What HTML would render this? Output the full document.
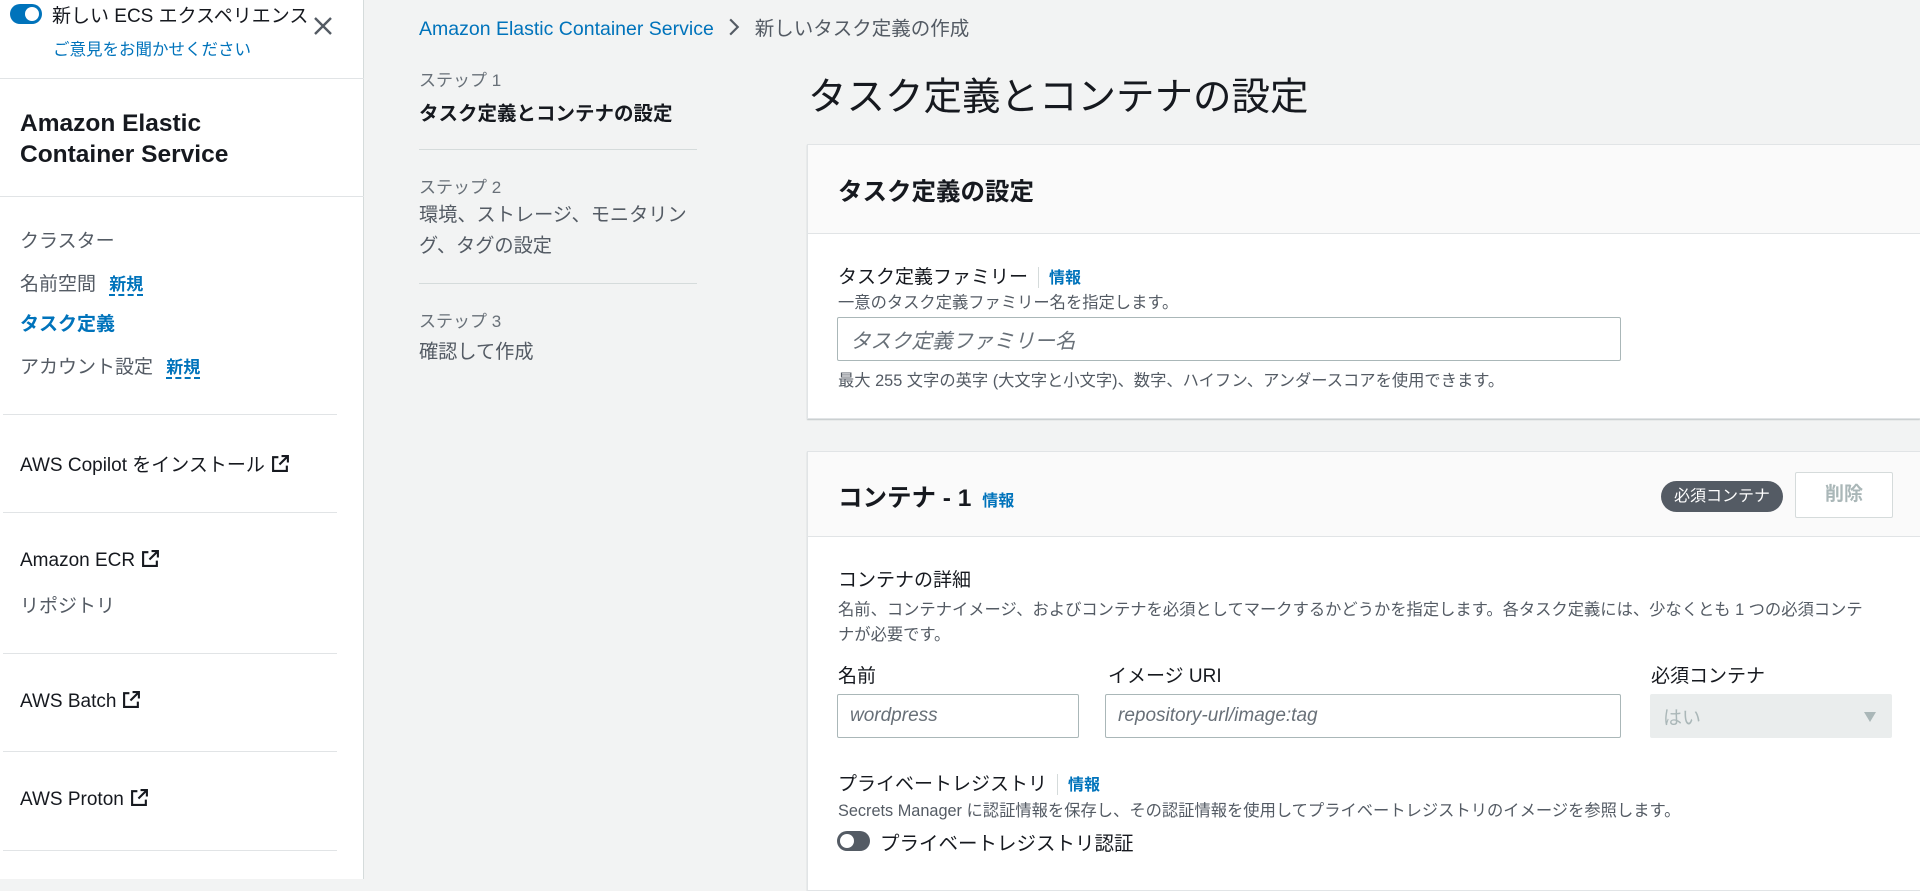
<!DOCTYPE html>
<html><head><meta charset="utf-8"><style>
*{box-sizing:border-box;margin:0;padding:0}
body{width:1920px;height:879px;overflow:hidden;background:#f2f3f3;font-family:"Liberation Sans","Noto Sans CJK JP",sans-serif;color:#16191f;position:relative}
.a{position:absolute;white-space:nowrap}
#side{position:absolute;left:0;top:0;width:364px;height:879px;background:#fff;border-right:1px solid #d5dbdb}
.hr{position:absolute;height:1px;background:#e1e4e6}
.blue{color:#0073bb}
.nav{font-size:19px;color:#545b64}
.new{font-size:17px;font-weight:bold;color:#0073bb;border-bottom:2px dashed #0073bb;line-height:18px}
.ext{display:inline-block;vertical-align:-2px;margin-left:6px}
.step{font-size:17px;color:#687078}
.panel{position:absolute;left:807px;right:0;background:#fff;border:1px solid #e1e4e6;border-right:none;box-shadow:0 1px 1px rgba(0,28,36,.2)}
.ph{background:#fafafa;border-bottom:1px solid #e1e4e6;position:relative}
.lbl{font-size:19px;color:#16191f}
.desc{font-size:16.3px;color:#545b64}
.inp{position:absolute;border:1px solid #aab7b8;border-radius:2px;background:#fff;font-size:19px;font-style:italic;color:#687078;padding-left:12px;display:flex;align-items:center}
.info{font-size:16px;font-weight:bold;color:#0073bb}
</style></head><body>
<div id="side">
  <div class="a" style="left:10px;top:4px;width:32px;height:20px;border-radius:10px;background:#0073bb"><div style="position:absolute;right:3px;top:3px;width:14px;height:14px;border-radius:7px;background:#fff"></div></div>
  <div class="a" style="left:52px;top:1px;font-size:19px">新しい ECS エクスペリエンス</div>
  <svg class="a" style="left:313px;top:16px" width="20" height="20" viewBox="0 0 20 20"><path d="M2 2L18 18M18 2L2 18" stroke="#545b64" stroke-width="2.4"/></svg>
  <div class="a blue" style="left:53px;top:36px;font-size:16.5px">ご意見をお聞かせください</div>
  <div class="hr" style="left:0;width:364px;top:78px"></div>
  <div class="a" style="left:20px;top:108px;font-size:24.5px;font-weight:bold;line-height:31px">Amazon Elastic<br>Container Service</div>
  <div class="hr" style="left:0;width:364px;top:196px"></div>
  <div class="a nav" style="left:20px;top:226px">クラスター</div>
  <div class="a nav" style="left:20px;top:269px">名前空間 <span class="new" style="margin-left:8px">新規</span></div>
  <div class="a" style="left:20px;top:309px;font-size:19px;font-weight:bold;color:#0073bb">タスク定義</div>
  <div class="a nav" style="left:20px;top:352px">アカウント設定 <span class="new" style="margin-left:8px">新規</span></div>
  <div class="hr" style="left:3px;width:334px;top:414px"></div>
  <div class="a nav" style="left:20px;top:450px;color:#16191f">AWS Copilot をインストール<svg class="ext" width="19" height="19" viewBox="0 0 18 18"><path d="M10 2h6v6M16 2L8 10M7 3H2v13h13v-5" fill="none" stroke="#16191f" stroke-width="2"/></svg></div>
  <div class="hr" style="left:3px;width:334px;top:512px"></div>
  <div class="a nav" style="left:20px;top:549px;color:#16191f">Amazon ECR<svg class="ext" width="19" height="19" viewBox="0 0 18 18"><path d="M10 2h6v6M16 2L8 10M7 3H2v13h13v-5" fill="none" stroke="#16191f" stroke-width="2"/></svg></div>
  <div class="a nav" style="left:20px;top:591px">リポジトリ</div>
  <div class="hr" style="left:3px;width:334px;top:653px"></div>
  <div class="a nav" style="left:20px;top:690px;color:#16191f">AWS Batch<svg class="ext" width="19" height="19" viewBox="0 0 18 18"><path d="M10 2h6v6M16 2L8 10M7 3H2v13h13v-5" fill="none" stroke="#16191f" stroke-width="2"/></svg></div>
  <div class="hr" style="left:3px;width:334px;top:751px"></div>
  <div class="a nav" style="left:20px;top:788px;color:#16191f">AWS Proton<svg class="ext" width="19" height="19" viewBox="0 0 18 18"><path d="M10 2h6v6M16 2L8 10M7 3H2v13h13v-5" fill="none" stroke="#16191f" stroke-width="2"/></svg></div>
  <div class="hr" style="left:3px;width:334px;top:850px"></div>
</div>

<div class="a" style="left:419px;top:12px;font-size:19.5px"><span class="blue">Amazon Elastic Container Service</span><svg style="margin:0 14px;vertical-align:-2px" width="13" height="20" viewBox="0 0 12 18"><path d="M2 2l7 7-7 7" fill="none" stroke="#545b64" stroke-width="2"/></svg><span style="color:#545b64">新しいタスク定義の作成</span></div>

<div class="a step" style="left:419px;top:66px">ステップ 1</div>
<div class="a" style="left:419px;top:97px;font-size:19.5px;font-weight:bold">タスク定義とコンテナの設定</div>
<div class="hr" style="left:419px;width:278px;top:149px;background:#d5dbdb"></div>
<div class="a step" style="left:419px;top:173px">ステップ 2</div>
<div class="a" style="left:419px;top:200px;font-size:19.2px;color:#545b64;line-height:31px">環境、ストレージ、モニタリン<br>グ、タグの設定</div>
<div class="hr" style="left:419px;width:278px;top:283px;background:#d5dbdb"></div>
<div class="a step" style="left:419px;top:307px">ステップ 3</div>
<div class="a" style="left:419px;top:336px;font-size:19.2px;color:#545b64">確認して作成</div>

<div class="a" style="left:808px;top:66px;font-size:38.5px;color:#16191f">タスク定義とコンテナの設定</div>

<div class="panel" style="top:144px;height:275px">
  <div class="ph" style="height:89px"><div class="a" style="left:30px;top:28px;font-size:24.5px;font-weight:bold">タスク定義の設定</div></div>
  <div class="a lbl" style="left:30px;top:117px">タスク定義ファミリー<span style="border-left:1px solid #d5dbdb;margin:0 10px"></span><span class="info">情報</span></div>
  <div class="a desc" style="left:30px;top:144px">一意のタスク定義ファミリー名を指定します。</div>
  <div class="inp" style="left:29px;top:172px;width:784px;height:44px;font-size:20.5px">タスク定義ファミリー名</div>
  <div class="a desc" style="left:30px;top:222px">最大 255 文字の英字 (大文字と小文字)、数字、ハイフン、アンダースコアを使用できます。</div>
</div>

<div class="panel" style="top:451px;height:440px">
  <div class="ph" style="height:85px">
    <div class="a" style="left:30px;top:27px;font-size:24.5px;font-weight:bold">コンテナ - 1 <span class="info" style="font-size:16px;margin-left:4px">情報</span></div>
    <div class="a" style="left:853px;top:29px;width:122px;height:31px;border-radius:16px;background:#545b64;color:#fff;font-size:16px;text-align:center;line-height:31px">必須コンテナ</div>
    <div class="a" style="left:987px;top:20px;width:98px;height:46px;border:1px solid #d5dbdb;border-radius:2px;background:#fff;color:#aab7b8;font-size:19px;font-weight:bold;text-align:center;line-height:44px">削除</div>
  </div>
  <div class="a lbl" style="left:30px;top:113px">コンテナの詳細</div>
  <div class="a desc" style="left:30px;top:146px;line-height:25px">名前、コンテナイメージ、およびコンテナを必須としてマークするかどうかを指定します。各タスク定義には、少なくとも 1 つの必須コンテ<br>ナが必要です。</div>
  <div class="a lbl" style="left:30px;top:209px">名前</div>
  <div class="a lbl" style="left:300px;top:209px">イメージ URI</div>
  <div class="a lbl" style="left:843px;top:209px">必須コンテナ</div>
  <div class="inp" style="left:29px;top:242px;width:242px;height:44px">wordpress</div>
  <div class="inp" style="left:297px;top:242px;width:516px;height:44px">repository-url/image:tag</div>
  <div class="inp" style="left:842px;top:242px;width:242px;height:44px;background:#eaeded;border-color:#eaeded;font-style:normal;color:#aab7b8">はい<svg class="a" style="left:212px;top:16px" width="14" height="12" viewBox="0 0 14 12"><path d="M1 1h12L7 11z" fill="#aab7b8"/></svg></div>
  <div class="a lbl" style="left:30px;top:317px">プライベートレジストリ<span style="border-left:1px solid #d5dbdb;margin:0 10px"></span><span class="info">情報</span></div>
  <div class="a desc" style="left:30px;top:345px">Secrets Manager に認証情報を保存し、その認証情報を使用してプライベートレジストリのイメージを参照します。</div>
  <div class="a" style="left:29px;top:379px;width:33px;height:20px;border-radius:10px;background:#545b64"><div style="position:absolute;left:3px;top:3px;width:14px;height:14px;border-radius:7px;background:#fff"></div></div>
  <div class="a" style="left:72px;top:375px;font-size:19.5px">プライベートレジストリ認証</div>
</div>
</body></html>
